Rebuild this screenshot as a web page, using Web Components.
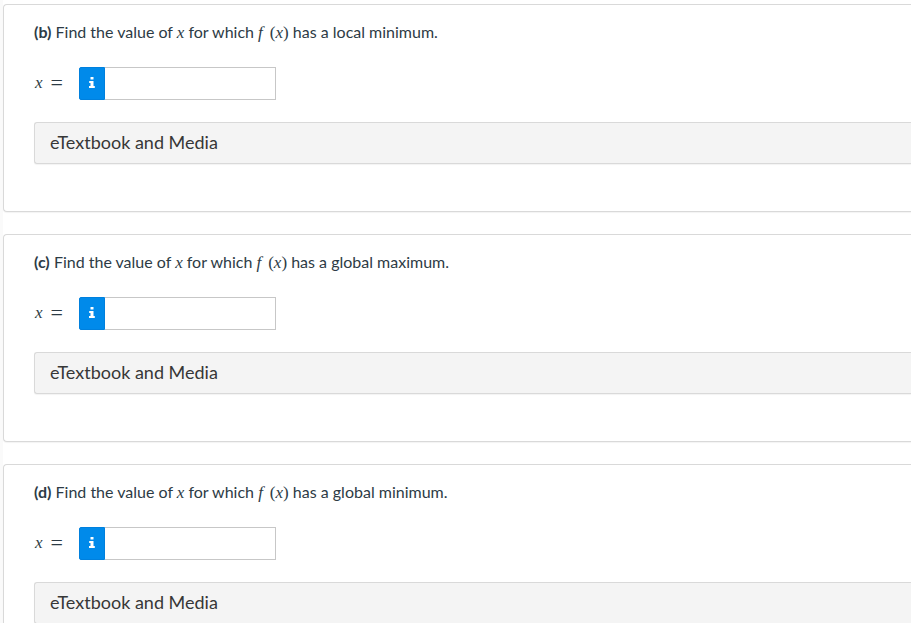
<!DOCTYPE html>
<html lang="en">
<head>
<meta charset="utf-8">
<meta name="viewport" content="width=device-width, initial-scale=1">
<title>Question parts</title>
<style>
  body {
    margin: 0;
    background: #fff;
    color: #2d3b45;
    font: 16px/24px Lato, sans-serif;
    overflow-x: hidden;
  }
</style>
</head>
<body>
<question-list>
  <question-part label="(b)">
    Find the value of <math-text>x</math-text> for which <math-text call>f</math-text> has a local minimum.
  </question-part>
  <question-part label="(c)">
    Find the value of <math-text>x</math-text> for which <math-text call>f</math-text> has a global maximum.
  </question-part>
  <question-part label="(d)">
    Find the value of <math-text>x</math-text> for which <math-text call>f</math-text> has a global minimum.
  </question-part>
</question-list>

<script>
class MathText extends HTMLElement {
  constructor() {
    super();
    this.attachShadow({ mode: 'open' });
    // "call" turns the name into a function of x
    const args = this.hasAttribute('call') ? '<span class="args">(<i>x</i>)</span>' : '';
    this.shadowRoot.innerHTML = `
      <style>
        :host {
          font-family: 'Liberation Serif', serif;
          font-size: 17px;
          line-height: 1;
        }
        .args {
          margin-left: 7px;
        }
      </style>
      <i><slot></slot></i>${args}`;
  }
}

class AnswerInput extends HTMLElement {
  constructor() {
    super();
    this.attachShadow({ mode: 'open' });
    this.shadowRoot.innerHTML = `
      <style>
        :host {
          display: flex;
          align-items: center;
          height: 33px;
        }
        label {
          box-sizing: border-box;
          width: 45px;
          padding: 0 0 2px 1px;
          font-family: 'Liberation Serif', serif;
          font-size: 17px;
        }
        label span {
          margin-left: 8px;
          font-size: 22px;
          line-height: 24px;
          vertical-align: -2px;
        }
        button {
          display: flex;
          align-items: center;
          justify-content: center;
          width: 26px;
          height: 33px;
          padding: 0 0 2px;
          border: 1px solid #0080dd;
          border-radius: 2px 0 0 2px;
          background: #008aea;
          color: #fff;
        }
        svg {
          width: 6px;
          height: 11px;
          fill: currentColor;
        }
        input {
          box-sizing: border-box;
          width: 171px;
          height: 33px;
          margin: 0;
          padding: 4px 8px;
          border: 1px solid #c7c7c7;
          border-left: 0;
          border-radius: 0;
          background: #fff;
          color: inherit;
          font: inherit;
        }
      </style>
      <label for="answer"><i>x</i><span>=</span></label>
      <button type="button" aria-label="Input help">
        <svg viewBox="0 0 6 11" aria-hidden="true">
          <path d="M1.5 0h3v2.5h-3zM0.2 4h4.3v5h1.3v2H0V9h1.5V6H0.2z"/>
        </svg>
      </button>
      <input id="answer" type="text" autocomplete="off">`;
  }
}

class MediaPanel extends HTMLElement {
  constructor() {
    super();
    this.attachShadow({ mode: 'open' });
    this.shadowRoot.innerHTML = `
      <style>
        :host {
          display: block;
        }
        button {
          display: block;
          box-sizing: border-box;
          width: 100%;
          height: 42px;
          margin: 0;
          padding: 0 15px 2px;
          border: 1px solid #d9d9d9;
          border-right: 0;
          border-radius: 3px 0 0 3px;
          background: #f4f4f4;
          box-shadow: 0 1px 1px rgba(0, 0, 0, 0.05);
          color: #373737;
          font: 18px/24px Lato, sans-serif;
          text-align: left;
        }
      </style>
      <button type="button"><slot></slot></button>`;
  }
}

class QuestionPart extends HTMLElement {
  constructor() {
    super();
    this.attachShadow({ mode: 'open' });
    this.shadowRoot.innerHTML = `
      <style>
        :host {
          display: flex;
          flex-direction: column;
          gap: 22px;
          padding: 15px 0 47px 30px;
          border: 1px solid #d9d9d9;
          border-right: 0;
          border-radius: 4px 0 0 4px;
          background: #fff;
          box-shadow: 0 1px 1px rgba(0, 0, 0, 0.05);
        }
        p {
          margin: 0;
          padding-bottom: 1px;
        }
      </style>
      <p><b>${this.getAttribute('label')}</b> <slot></slot></p>
      <answer-input></answer-input>
      <media-panel>eTextbook and Media</media-panel>`;
  }
}

class QuestionList extends HTMLElement {
  constructor() {
    super();
    this.attachShadow({ mode: 'open' });
    this.shadowRoot.innerHTML = `
      <style>
        :host {
          display: flex;
          flex-direction: column;
          gap: 22px;
          padding: 4px 0 22px;
          border-left: 3px solid #fafafa;
        }
      </style>
      <slot></slot>`;
  }
}

customElements.define('math-text', MathText);
customElements.define('answer-input', AnswerInput);
customElements.define('media-panel', MediaPanel);
customElements.define('question-part', QuestionPart);
customElements.define('question-list', QuestionList);
</script>
</body>
</html>
